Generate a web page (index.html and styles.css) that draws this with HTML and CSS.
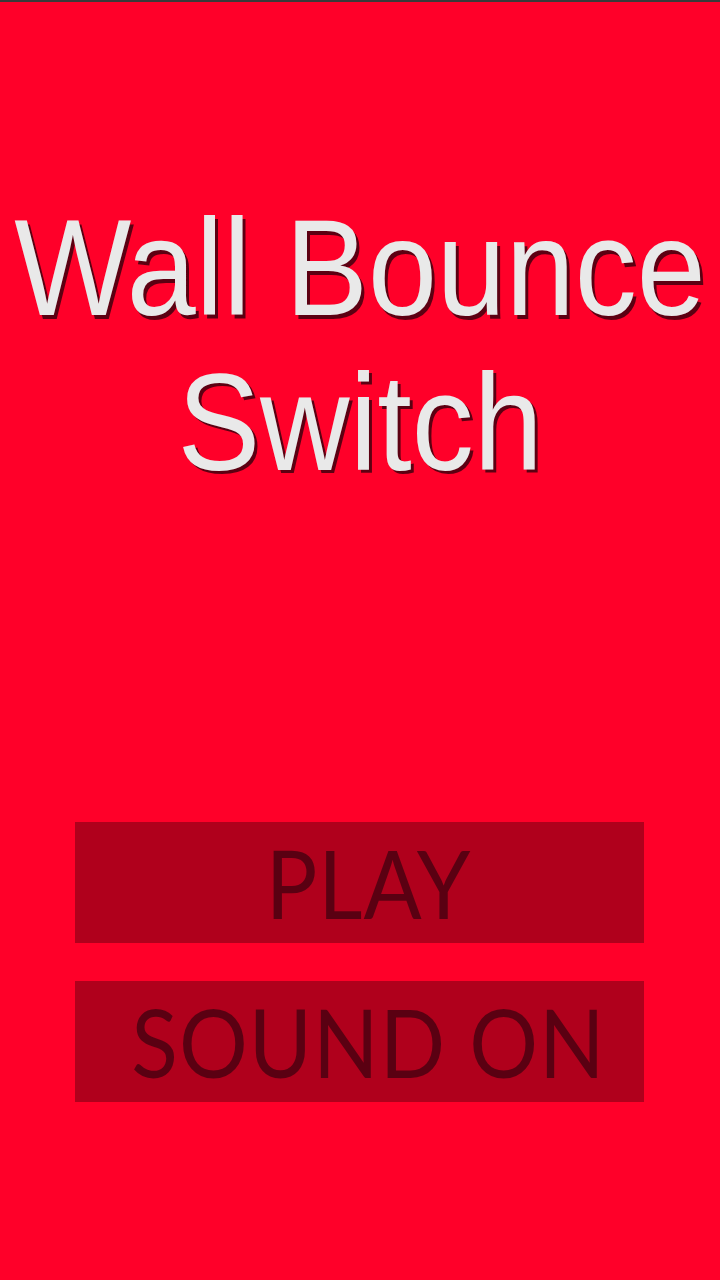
FILE: index.html
```html
<!DOCTYPE html>
<html>
<head>
    <title>Wall Bounce Switch</title>
    <link rel="stylesheet" href="styles.css">
</head>
<body>

    <div class="status-bar"></div>

    <h1 class="title">
        <span class="title-line">Wall Bounce</span>
        <span class="title-line">Switch</span>
    </h1>

    <div class="menu">
        <button class="menu-button" id="playButton"><span>PLAY</span></button>
        <button class="menu-button" id="soundButton"><span>SOUND ON</span></button>
    </div>

    <script>
        let soundOn = true;

        document.getElementById('soundButton').addEventListener('click', function() {
            soundOn = !soundOn;
            this.firstElementChild.textContent = soundOn ? 'SOUND ON' : 'SOUND OFF';
        });
    </script>

</body>
</html>
```

FILE: styles.css
```css
body {
    margin: 0;
    height: 1280px;
    background-color: #ff0029;
    font-family: "Liberation Sans", Arial, sans-serif;
    overflow: hidden;
}

.status-bar {
    height: 2px;
    background-color: #3a3a3a;
}

.title {
    margin: 189px 0 0;
    font-size: 124px;
    font-weight: normal;
    line-height: 139px;
    color: #e9e9e9;
    text-align: center;
    text-shadow: 3px 3px 0 #5c0012;
    transform: scaleY(1.11);
    transform-origin: top center;
}

.title-line {
    display: block;
    white-space: nowrap;
}

.menu {
    display: flex;
    flex-direction: column;
    gap: 38px;
    width: 569px;
    margin: 353px 0 0 75px;
}

.menu-button {
    height: 121px;
    padding: 0 0 0 18px;
    border: none;
    background-color: #b0001c;
    color: #5a0012;
    font-family: Lato, "Liberation Sans", sans-serif;
    font-size: 86px;
    font-weight: 400;
    letter-spacing: 1px;
    cursor: pointer;
    display: flex;
    align-items: center;
    justify-content: center;
}

.menu-button span {
    display: inline-block;
    transform: scaleY(1.1);
}

.menu-button:hover {
    opacity: 0.9;
}
```
